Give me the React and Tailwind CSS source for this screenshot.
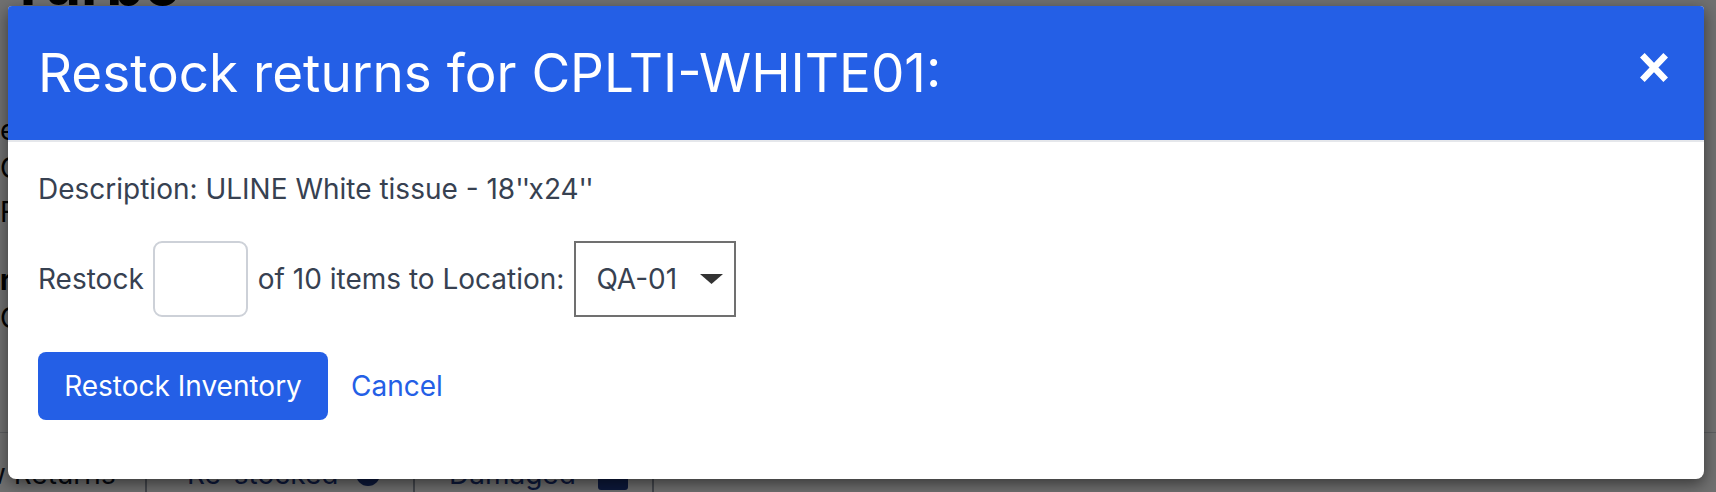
import React from "react";

export default function App() {
  return (
    <div className="relative h-[492px] w-[1716px] overflow-hidden bg-white font-['Inter',sans-serif]">
      {/* background page */}
      <div className="flex h-full flex-col">
        <div className="-mt-[47px] h-[60px] pl-[8px] text-[60px] font-bold leading-none text-black">
          Turbo
        </div>
        <div className="mt-[98px] flex flex-col text-[28px] leading-[38px] text-black">
          <div className="h-[38px]">elete</div>
          <div className="h-[38px]">Customer</div>
          <div className="mt-[6px] h-[38px]">From</div>
          <div className="mt-[30px] h-[38px] font-bold">re</div>
          <div className="h-[38px]">Customer</div>
        </div>
        <div className="mt-auto flex h-[60px] border-t border-[#d1d5db] text-[28px] leading-none text-[#1e3a8a]">
          <div className="w-[147px] border-r-2 border-[#9ca3af] pt-[27px]">
            <span className="-ml-[54px] text-[#111827]">New Returns</span>
          </div>
          <div className="flex w-[268px] items-start gap-[18px] border-r-2 border-[#9ca3af] pl-[40px] pt-[27px]">
            <span>Re-stocked</span>
            <span className="mt-[2px] h-[24px] w-[24px] rounded-full bg-[#1e3a8a]" />
          </div>
          <div className="flex w-[239px] items-start gap-[22px] border-r-2 border-[#9ca3af] pl-[34px] pt-[27px]">
            <span>Damaged</span>
            <span className="mt-[2px] h-[28px] w-[30px] rounded-[3px] bg-[#1e3a8a]" />
          </div>
        </div>
      </div>

      {/* overlay */}
      <div className="absolute inset-0 bg-black/[0.56]" />

      {/* modal */}
      <div className="absolute left-[8px] top-[6px] flex h-[473px] w-[1696px] flex-col overflow-hidden rounded-b-[8px] rounded-t-[4px] bg-white shadow-[0_5px_15px_rgba(0,0,0,0.5)]">
        <div className="flex h-[134px] shrink-0 items-center justify-between bg-[#245fe6] pl-[30px] pr-[36px]">
          <h2 className="text-[53px] font-normal leading-none text-white">
            Restock returns for CPLTI-WHITE01:
          </h2>
          <button className="mb-[12px] flex h-[29px] w-[28px] items-center justify-center">
            <svg width="28" height="29" viewBox="0 0 28 29">
              <path d="M2.3 2.3 L25.7 26.7 M25.7 2.3 L2.3 26.7" stroke="white" strokeWidth="6.5" strokeLinecap="butt" fill="none" />
            </svg>
          </button>
        </div>
        <div className="h-[2px] shrink-0 bg-[#e5e7eb]" />
        <div className="flex flex-col pl-[30px] pt-[26px] text-[28px] text-[#374151]">
          <p className="leading-[42px]">
            Description: ULINE White tissue - 18<span className="tracking-[-0.06em]">''</span>x24<span className="tracking-[-0.06em]">''</span>
          </p>
          <div className="mt-[31px] flex h-[76px] items-center gap-[9px] leading-none">
            <span>Restock</span>
            <div className="h-[76px] w-[95px] rounded-[9px] border-2 border-[#cdd1d8] bg-white" />
            <span className="ml-[1px]">of 10 items to Location:</span>
            <div className="ml-[1px] flex h-[76px] w-[162px] items-center justify-between border-2 border-[#707070] pl-[20px] pr-[11px]">
              <span>QA-01</span>
              <svg width="23" height="10" viewBox="0 0 23 10">
                <path d="M0 0 L23 0 L11.5 10 Z" fill="#333333" />
              </svg>
            </div>
          </div>
          <div className="mt-[35px] flex items-center">
            <button className="flex h-[68px] w-[290px] items-center justify-center rounded-[8px] bg-[#245fe6] leading-none text-white">
              Restock Inventory
            </button>
            <span className="ml-[23px] leading-none text-[#245fe6]">Cancel</span>
          </div>
        </div>
      </div>
    </div>
  );
}
